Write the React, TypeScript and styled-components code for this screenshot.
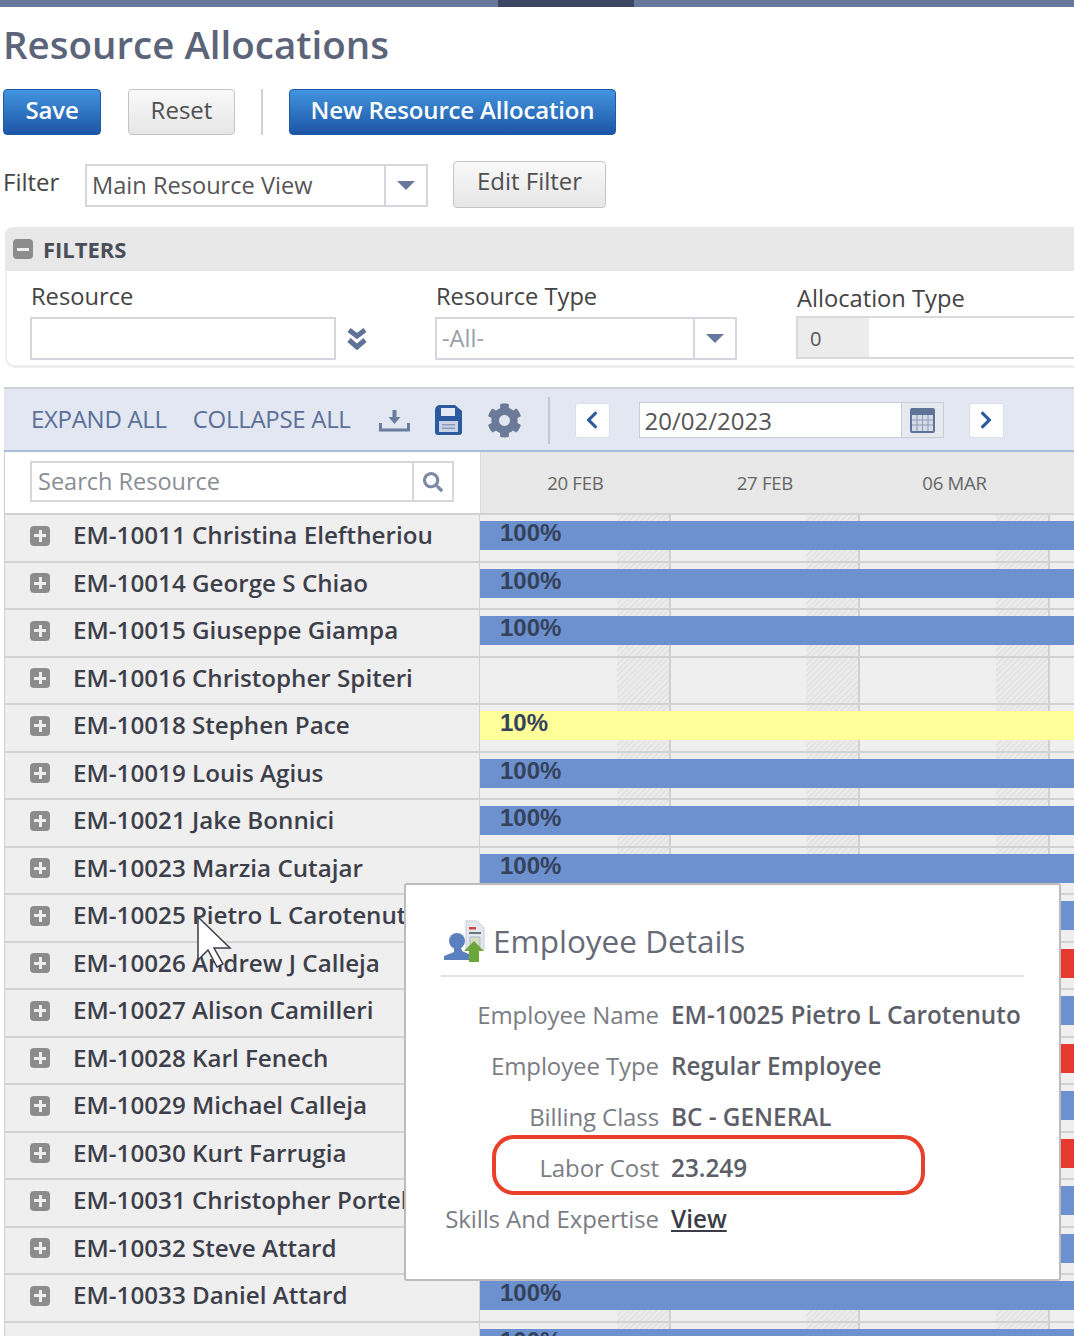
import React from 'react';
import styled, { createGlobalStyle } from 'styled-components';
import { FaChevronLeft, FaChevronRight, FaCog, FaSearch } from 'react-icons/fa';

const GlobalStyle = createGlobalStyle`
  html, body {
    margin: 0;
    padding: 0;
    background: #fff;
  }
  * {
    box-sizing: border-box;
  }
`;

type BarKind = 'blue' | 'yellow' | 'red';

type Resource = {
  name: string;
  bar?: BarKind;
  label?: string;
};

const resources: Resource[] = [
  { name: 'EM-10011 Christina Eleftheriou', bar: 'blue', label: '100%' },
  { name: 'EM-10014 George S Chiao', bar: 'blue', label: '100%' },
  { name: 'EM-10015 Giuseppe Giampa', bar: 'blue', label: '100%' },
  { name: 'EM-10016 Christopher Spiteri' },
  { name: 'EM-10018 Stephen Pace', bar: 'yellow', label: '10%' },
  { name: 'EM-10019 Louis Agius', bar: 'blue', label: '100%' },
  { name: 'EM-10021 Jake Bonnici', bar: 'blue', label: '100%' },
  { name: 'EM-10023 Marzia Cutajar', bar: 'blue', label: '100%' },
  { name: 'EM-10025 Pietro L Carotenuto', bar: 'blue', label: '100%' },
  { name: 'EM-10026 Andrew J Calleja', bar: 'red', label: '100%' },
  { name: 'EM-10027 Alison Camilleri', bar: 'blue', label: '100%' },
  { name: 'EM-10028 Karl Fenech', bar: 'red', label: '100%' },
  { name: 'EM-10029 Michael Calleja', bar: 'blue', label: '100%' },
  { name: 'EM-10030 Kurt Farrugia', bar: 'red', label: '100%' },
  { name: 'EM-10031 Christopher Portelli', bar: 'blue', label: '100%' },
  { name: 'EM-10032 Steve Attard', bar: 'blue', label: '100%' },
  { name: 'EM-10033 Daniel Attard', bar: 'blue', label: '100%' },
  { name: '', bar: 'blue', label: '100%' },
];

const details = [
  { label: 'Employee Name', value: 'EM-10025 Pietro L Carotenuto' },
  { label: 'Employee Type', value: 'Regular Employee' },
  { label: 'Billing Class', value: 'BC - GENERAL' },
  { label: 'Labor Cost', value: '23.249', highlighted: true },
  { label: 'Skills And Expertise', value: 'View', link: true },
];

const weeks = ['20 FEB', '27 FEB', '06 MAR'];

const barColors: Record<BarKind, string> = {
  blue: '#6d90ce',
  yellow: '#ffff99',
  red: '#e6392f',
};

const Screen = styled.div`
  position: relative;
  width: 1074px;
  height: 1336px;
  overflow: hidden;
  background: #fff;
  font-family: 'Open Sans', sans-serif;
`;

const TopBar = styled.div`
  display: flex;
  height: 7px;
  background: #67789c;
`;

const TopBarActive = styled.div`
  width: 136px;
  margin-left: 498px;
  background: #3c4662;
`;

const Page = styled.div`
  padding-left: 3px;
`;

const Title = styled.h1`
  margin: 0 0 6px;
  height: 76px;
  font-size: 38.5px;
  line-height: 74px;
  font-weight: 600;
  color: #5b6478;
`;

const ActionBar = styled.div`
  display: flex;
  height: 46px;
`;

const Button = styled.button<{ $primary?: boolean; $width: number; $gap?: number; $lift?: number }>`
  width: ${p => p.$width}px;
  margin-left: ${p => p.$gap ?? 0}px;
  padding: 0 0 ${p => p.$lift ?? 6}px;
  border-radius: 4px;
  border: 1px solid ${p => (p.$primary ? '#1e5aa6' : '#c4c4c4')};
  background: ${p =>
    p.$primary
      ? 'linear-gradient(#4294de, #1c55a6)'
      : 'linear-gradient(#f9f9f9, #e6e6e6)'};
  color: ${p => (p.$primary ? '#fff' : '#4f4f4f')};
  font-family: 'Open Sans', sans-serif;
  font-size: 24px;
  font-weight: ${p => (p.$primary ? 600 : 500)};
  letter-spacing: ${p => (p.$primary ? -0.15 : 0)}px;
`;

const Divider = styled.div`
  width: 2px;
  margin-left: 26px;
  background: #d0d0d0;
`;

const FilterRow = styled.div`
  display: flex;
  height: 47px;
  margin-top: 26px;
`;

const FilterLabel = styled.div`
  width: 82px;
  padding-top: 6px;
  font-size: 24px;
  line-height: 30px;
  color: #444;
`;

const SelectBox = styled.div<{ $width: number; $muted?: boolean }>`
  display: flex;
  align-items: center;
  width: ${p => p.$width}px;
  height: 43px;
  border: 2px solid #d6d6de;
  background: #fff;
  font-size: 23.6px;
  color: ${p => (p.$muted ? '#9a9ea8' : '#555')};
`;

const SelectText = styled.div`
  flex: 1;
  padding: 0 0 1px 5px;
  white-space: nowrap;
`;

const SelectArrow = styled.div`
  display: flex;
  align-items: center;
  justify-content: center;
  width: 42px;
  height: 100%;
  border-left: 2px solid #d6d6de;
`;

const Caret = styled.div`
  width: 0;
  height: 0;
  border-left: 9px solid transparent;
  border-right: 9px solid transparent;
  border-top: 9px solid #67789c;
`;

const FilterSelect = styled(SelectBox)`
  margin-top: 3px;
`;

const Panel = styled.section`
  margin: 19px 0 0 2px;
`;

const PanelHeader = styled.div`
  display: flex;
  align-items: center;
  gap: 10px;
  height: 44px;
  padding-left: 8px;
  border-radius: 8px 0 0 0;
  background: #e8e8e8;
`;

const SquareIcon = styled.div<{ $plus?: boolean }>`
  position: relative;
  flex: none;
  width: 20px;
  height: 20px;
  border-radius: 4px;
  background: #8c8c8c;
  &::before {
    content: '';
    position: absolute;
    left: 4px;
    top: 8.5px;
    width: 12px;
    height: 3px;
    background: #eee;
  }
  ${p =>
    p.$plus &&
    `&::after {
      content: '';
      position: absolute;
      left: 8.5px;
      top: 4px;
      width: 3px;
      height: 12px;
      background: #eee;
    }`}
`;

const PanelTitle = styled.div`
  font-size: 22px;
  font-weight: 700;
  color: #4a4e58;
`;

const PanelBody = styled.div`
  display: flex;
  height: 97px;
  padding: 12px 0 0 23px;
  border: 2px solid #eee;
  border-width: 0 0 3px 2px;
  border-radius: 0 0 0 10px;
`;

const Field = styled.div<{ $width?: number; $offset?: number }>`
  flex: ${p => (p.$width ? 'none' : '1')};
  width: ${p => (p.$width ? `${p.$width}px` : 'auto')};
  margin-top: ${p => p.$offset ?? 0}px;
`;

const FieldLabel = styled.div`
  height: 28px;
  padding-left: 1px;
  font-size: 23.7px;
  line-height: 26px;
  color: #444;
  white-space: nowrap;
`;

const FieldControl = styled.div`
  display: flex;
  align-items: center;
  gap: 10px;
  margin-top: 6px;
`;

const AllocationInput = styled.div`
  display: flex;
  height: 43px;
  margin: 3px -2px 0 0;
  border: 2px solid #d9d9d9;
  border-right: 0;
`;

const AllocationValue = styled.div`
  width: 71px;
  padding-left: 12px;
  background: #ececec;
  font-size: 20px;
  line-height: 42px;
  color: #555;
`;

const Toolbar = styled.div`
  display: flex;
  align-items: center;
  height: 65px;
  margin: 19px 0 0 1px;
  padding: 1px 0 0 27px;
  border-top: 2px solid #d0d0d0;
  border-bottom: 2px solid #a9bedb;
  background: #e2e7f1;
`;

const ToolLink = styled.div<{ $gap?: number }>`
  margin-left: ${p => p.$gap ?? 0}px;
  padding-bottom: 3px;
  font-size: 24px;
  letter-spacing: -0.3px;
  color: #5b6f99;
  white-space: nowrap;
`;

const ToolIcon = styled.div<{ $left: number; $color: string }>`
  display: flex;
  margin-left: ${p => p.$left}px;
  color: ${p => p.$color};
`;

const ToolDivider = styled.div`
  width: 2px;
  height: 47px;
  margin-left: 26px;
  background: #c2c6ce;
`;

const NavButton = styled.div<{ $left: number }>`
  display: flex;
  align-items: center;
  justify-content: center;
  width: 35px;
  height: 35px;
  margin-left: ${p => p.$left}px;
  border: 1px solid #dde;
  border-radius: 3px;
  background: #fff;
  color: #2f5a9e;
`;

const DateBox = styled.div`
  display: flex;
  width: 305px;
  height: 36px;
  margin-left: 29px;
  border: 1px solid #c8ccd4;
`;

const DateValue = styled.div`
  flex: 1;
  padding-left: 5px;
  background: #fff;
  font-size: 24px;
  line-height: 35px;
  color: #555;
`;

const DateIcon = styled.div`
  display: flex;
  flex: none;
  align-items: center;
  width: 42px;
  padding-left: 8px;
  border-left: 1px solid #c8ccd4;
  background: #e6e9f0;
`;

const Gantt = styled.div`
  margin-left: 1px;
  border-left: 1px solid #cfcfcf;
`;

const GanttHead = styled.div`
  display: flex;
  height: 61px;
`;

const SearchCell = styled.div`
  flex: none;
  width: 475px;
  padding: 9px 0 0 25px;
  background: #fff;
`;

const SearchBox = styled.div`
  display: flex;
  width: 424px;
  height: 41px;
  border: 2px solid #d6d6de;
`;

const SearchText = styled.div`
  flex: 1;
  padding-left: 6px;
  font-size: 23.5px;
  line-height: 36px;
  color: #8a8d94;
`;

const SearchIcon = styled.div`
  display: flex;
  align-items: center;
  justify-content: center;
  width: 40px;
  border-left: 2px solid #d6d6de;
  color: #7d8aa6;
`;

const DateHead = styled.div`
  display: flex;
  flex: 1;
  border-left: 1px solid #ddd;
  background: #e8e8e8;
`;

const DateLabel = styled.div`
  flex: none;
  width: 189.6px;
  padding-right: 1px;
  font-size: 18.6px;
  line-height: 61px;
  text-align: center;
  color: #666;
  letter-spacing: -0.3px;
`;

const Row = styled.div`
  display: flex;
  height: 47.5px;
  border-top: 2px solid #d2d2d2;
  background: #efefef;
`;

const NameCell = styled.div`
  display: flex;
  flex: none;
  align-items: center;
  gap: 24px;
  width: 475px;
  padding: 0 0 4px 25px;
  border-right: 1px solid #d2d2d2;
`;

const Name = styled.div`
  padding-bottom: 2px;
  margin-left: -1px;
  font-size: 24.2px;
  font-weight: 600;
  color: #3d3f4a;
  white-space: nowrap;
`;

const Timeline = styled.div`
  position: relative;
  flex: 1;
  padding-top: 6px;
`;

const WeekStrip = styled.div`
  position: absolute;
  inset: 0 0 0 1px;
  display: flex;
`;

const Week = styled.div`
  display: flex;
  flex: none;
  justify-content: flex-end;
  width: 189.6px;
  border-right: 2px solid #d0d0d0;
`;

const Weekend = styled.div`
  width: 52px;
  background: repeating-linear-gradient(135deg, #e4e4e4 0 2px, #ececec 2px 4px);
`;

const Bar = styled.div<{ $kind: BarKind }>`
  position: relative;
  height: 29px;
  padding-left: 20px;
  background: ${p => barColors[p.$kind]};
  font-family: 'Liberation Sans', sans-serif;
  font-size: 24px;
  line-height: 24px;
  font-weight: 700;
  color: #34425c;
`;

const Popup = styled.div`
  position: absolute;
  left: 404px;
  top: 883px;
  width: 657px;
  height: 398px;
  padding: 30px 35px 0 35px;
  border: 2px solid #bcbcbc;
  border-radius: 3px;
  background: #fff;
`;

const PopupHeader = styled.div`
  display: flex;
  align-items: center;
  gap: 8px;
  height: 62px;
  padding: 0 0 6px 2px;
  border-bottom: 2px solid #e2e2e2;
`;

const PopupTitle = styled.div`
  padding-bottom: 4px;
  font-size: 31.5px;
  font-weight: 500;
  color: #676b78;
`;

const DetailList = styled.div`
  margin-top: 12px;
`;

const DetailRow = styled.div`
  position: relative;
  display: flex;
  gap: 12px;
  height: 51px;
  align-items: center;
`;

const DetailLabel = styled.div`
  flex: none;
  width: 218px;
  text-align: right;
  font-size: 24px;
  letter-spacing: -0.1px;
  color: #7b7d84;
  white-space: nowrap;
`;

const DetailValue = styled.div<{ $link?: boolean }>`
  font-size: 24.3px;
  font-weight: 600;
  color: ${p => (p.$link ? '#3a3d46' : '#5c5e68')};
  text-decoration: ${p => (p.$link ? 'underline' : 'none')};
  white-space: nowrap;
`;

const Highlight = styled.div`
  position: absolute;
  left: 51px;
  top: -7px;
  width: 433px;
  height: 60px;
  border: 4px solid #e8402a;
  border-radius: 22px;
`;

const Pointer = styled.svg`
  position: absolute;
  left: 196px;
  top: 915px;
`;

const DoubleChevronIcon = () => (
  <svg width="22" height="24" viewBox="0 0 22 24" fill="none" stroke="#5f7297" strokeWidth="5">
    <path d="M3 3l8 6 8-6" />
    <path d="M3 13l8 7 8-7" />
  </svg>
);

const DownloadIcon = () => (
  <svg width="31" height="24" viewBox="0 0 31 24" fill="none">
    <path d="M15.5 2v9" stroke="#6b7c9e" strokeWidth="4" />
    <path d="M9.5 9h12l-6 7z" fill="#6b7c9e" />
    <path d="M1.5 15v7h28v-7" stroke="#6b7c9e" strokeWidth="3" />
  </svg>
);

const PrintIcon = () => (
  <svg width="29" height="32" viewBox="0 0 29 32">
    <path d="M6 1h15l7 6v21a3 3 0 0 1-3 3H4a3 3 0 0 1-3-3V6a5 5 0 0 1 5-5z" fill="#2c5a9f" />
    <rect x="7" y="4" width="14" height="8" fill="#e2e7f1" />
    <rect x="5" y="17" width="19" height="11" fill="#c8d2e4" />
    <rect x="8" y="20" width="13" height="1.5" fill="#8a9cbc" />
    <rect x="8" y="23.5" width="13" height="1.5" fill="#8a9cbc" />
  </svg>
);

const CalendarIcon = () => (
  <svg width="25" height="25" viewBox="0 0 25 25">
    <rect width="25" height="25" rx="2" fill="#5f7297" />
    <rect x="2" y="7" width="21" height="16" fill="#d5dbe8" />
    <path d="M2 12h21M2 17h21M7 7v16M12.5 7v16M18 7v16" stroke="#8e9cb8" strokeWidth="1" />
  </svg>
);

const EmployeeIcon = () => (
  <svg width="42" height="44" viewBox="0 0 42 44">
    <path d="M23 1h11l7 7v22H23z" fill="#e4e8ee" stroke="#c3cad6" />
    <rect x="26" y="7" width="7" height="2.5" fill="#d0453e" />
    <rect x="26" y="12" width="12" height="2" fill="#6b7280" />
    <path d="M27 17h10v10H27z" fill="#d6dfc6" stroke="#a9b8cc" />
    <circle cx="14" cy="21" r="8" fill="#5a80c0" />
    <path d="M11 27h7l1 4 9 4v5H1v-4l10-4z" fill="#5a80c0" />
    <path d="M31 21l10 10h-5v11H26V31h-5z" fill="#6ca53a" />
  </svg>
);

const App = (): React.ReactElement => {
  return (
    <Screen>
      <GlobalStyle />
      <TopBar>
        <TopBarActive />
      </TopBar>
      <Page>
        <Title>Resource Allocations</Title>
        <ActionBar>
          <Button $primary $width={98}>Save</Button>
          <Button $width={107} $gap={27}>Reset</Button>
          <Divider />
          <Button $primary $width={327} $gap={26}>New Resource Allocation</Button>
        </ActionBar>
        <FilterRow>
          <FilterLabel>Filter</FilterLabel>
          <FilterSelect $width={343}>
            <SelectText>Main Resource View</SelectText>
            <SelectArrow><Caret /></SelectArrow>
          </FilterSelect>
          <Button $width={153} $gap={25} $lift={8}>Edit Filter</Button>
        </FilterRow>
        <Panel>
          <PanelHeader>
            <SquareIcon />
            <PanelTitle>FILTERS</PanelTitle>
          </PanelHeader>
          <PanelBody>
            <Field $width={405}>
              <FieldLabel>Resource</FieldLabel>
              <FieldControl>
                <SelectBox $width={306} />
                <DoubleChevronIcon />
              </FieldControl>
            </Field>
            <Field $width={361}>
              <FieldLabel>Resource Type</FieldLabel>
              <FieldControl>
                <SelectBox $width={302} $muted>
                  <SelectText>-All-</SelectText>
                  <SelectArrow><Caret /></SelectArrow>
                </SelectBox>
              </FieldControl>
            </Field>
            <Field $offset={2}>
              <FieldLabel>Allocation Type</FieldLabel>
              <AllocationInput>
                <AllocationValue>0</AllocationValue>
              </AllocationInput>
            </Field>
          </PanelBody>
        </Panel>
        <Toolbar>
          <ToolLink>EXPAND ALL</ToolLink>
          <ToolLink $gap={26}>COLLAPSE ALL</ToolLink>
          <ToolIcon $left={28} $color="#6b7c9e"><DownloadIcon /></ToolIcon>
          <ToolIcon $left={24} $color="#2c5a9f"><PrintIcon /></ToolIcon>
          <ToolIcon $left={24} $color="#6b7a99"><FaCog size={35} /></ToolIcon>
          <ToolDivider />
          <NavButton $left={25}><FaChevronLeft size={20} /></NavButton>
          <DateBox>
            <DateValue>20/02/2023</DateValue>
            <DateIcon><CalendarIcon /></DateIcon>
          </DateBox>
          <NavButton $left={25}><FaChevronRight size={20} /></NavButton>
        </Toolbar>
        <Gantt>
          <GanttHead>
            <SearchCell>
              <SearchBox>
                <SearchText>Search Resource</SearchText>
                <SearchIcon><FaSearch size={20} /></SearchIcon>
              </SearchBox>
            </SearchCell>
            <DateHead>
              {weeks.map(w => <DateLabel key={w}>{w}</DateLabel>)}
            </DateHead>
          </GanttHead>
          {resources.map((r, i) => (
            <Row key={i}>
              <NameCell>
                {r.name && <SquareIcon $plus />}
                <Name>{r.name}</Name>
              </NameCell>
              <Timeline>
                <WeekStrip>
                  {weeks.concat('').map((w, j) => (
                    <Week key={j}><Weekend /></Week>
                  ))}
                </WeekStrip>
                {r.bar && <Bar $kind={r.bar}>{r.label}</Bar>}
              </Timeline>
            </Row>
          ))}
        </Gantt>
      </Page>
      <Pointer width="40" height="54" viewBox="0 0 40 54">
        <path d="M2 2v43l10-10 9 17 6-3-9-16h16z" fill="#fff" stroke="#3a3f4a" strokeWidth="1.5" />
      </Pointer>
      <Popup>
        <PopupHeader>
          <EmployeeIcon />
          <PopupTitle>Employee Details</PopupTitle>
        </PopupHeader>
        <DetailList>
          {details.map(d => (
            <DetailRow key={d.label}>
              <DetailLabel>{d.label}</DetailLabel>
              <DetailValue $link={d.link}>{d.value}</DetailValue>
              {d.highlighted && <Highlight />}
            </DetailRow>
          ))}
        </DetailList>
      </Popup>
    </Screen>
  );
};

export default App;
